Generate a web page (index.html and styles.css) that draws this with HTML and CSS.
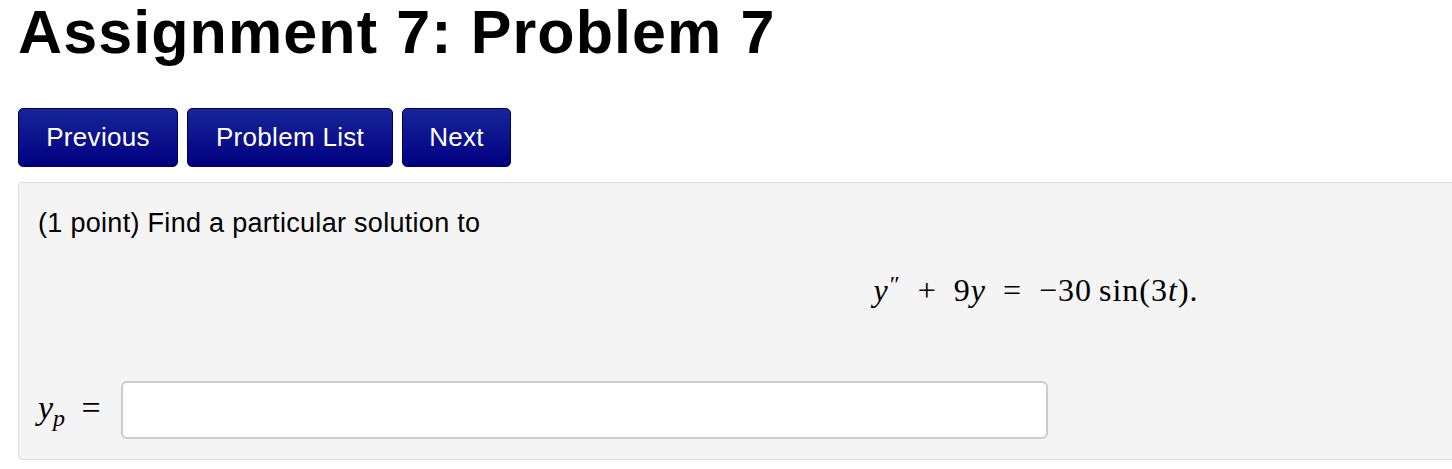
FILE: index.html
```html
<!DOCTYPE html>
<html lang="en">
<head>
<meta charset="UTF-8" />
<meta name="viewport" content="width=device-width, initial-scale=1" />
<title>Assignment 7: Problem 7</title>
<link rel="stylesheet" href="styles.css">
</head>
<body>
<div class="page">
  <h1 class="page-title">Assignment 7: Problem 7</h1>
  <nav class="problem-nav">
    <a href="#prev" class="nav-btn">Previous</a>
    <a href="#list" class="nav-btn">Problem List</a>
    <a href="#next" class="nav-btn">Next</a>
  </nav>
  <section class="problem">
    <p class="problem-text">(1 point) Find a particular solution to</p>
    <div class="math-display">
      <span class="mi">y</span><span class="prime">&Prime;</span>
      <span class="mo">+</span>
      <span class="mn">9</span><span class="mi">y</span>
      <span class="mo">=</span>
      <span class="mn neg">&minus;30</span><span class="fn">sin</span><span class="mn">(3</span><span class="mi">t</span><span class="mn">).</span>
    </div>
    <div class="answer-row">
      <label class="answer-label" for="ans">
        <span class="mi">y</span><sub class="mi sub">p</sub>
        <span class="mo">=</span>
      </label>
      <input type="text" id="ans" class="answer-input">
    </div>
  </section>
</div>
</body>
</html>
```

FILE: styles.css
```css
:root {
  --btn-top: #17259a;
  --btn-bottom: #00007f;
  --box-bg: #f4f4f4;
  --box-border: #dcdcdc;
  --ui-font: "Liberation Sans", Arial, sans-serif;
  --math-font: "Liberation Serif", "Times New Roman", serif;
}

*, *::before, *::after {
  box-sizing: border-box;
}

html, body {
  margin: 0;
  overflow: hidden;
  background: #fff;
  color: #000;
  font-family: var(--ui-font);
}

.page {
  padding-left: 18px;
}

/* Title */
.page-title {
  margin: 0;
  font-size: 61px;
  line-height: 64px;
  font-weight: bold;
  letter-spacing: 1.1px;
}

/* Nav buttons */
.problem-nav {
  display: flex;
  gap: 9px;
  margin-top: 44px;
}
.nav-btn {
  display: flex;
  align-items: center;
  justify-content: center;
  height: 59px;
  font-size: 26px;
  letter-spacing: 0.3px;
  color: #fff;
  text-decoration: none;
  background: linear-gradient(to bottom, var(--btn-top), var(--btn-bottom));
  border: 1px solid #00005e;
  border-radius: 5px;
}
.nav-btn:nth-child(1) { width: 160px; }
.nav-btn:nth-child(2) { width: 206px; }
.nav-btn:nth-child(3) { width: 109px; }

/* Problem box */
.problem {
  width: 2036px;
  margin-top: 15px;
  padding: 20px 19px 20px;
  background: var(--box-bg);
  border: 1px solid var(--box-border);
  border-radius: 4px;
}
.problem-text {
  margin: 5px 0 0;
  font-size: 27px;
  letter-spacing: 0.3px;
}

.math-display {
  margin-top: 32px;
  text-align: center;
  font-family: var(--math-font);
  font-size: 32px;
  letter-spacing: 1px;
  word-spacing: -2px;
}
.mi {
  font-style: italic;
}
.prime {
  font-size: 24px;
  vertical-align: 9px;
  margin-left: 1px;
}
.mo {
  margin: 0 10px;
}
.fn {
  margin-left: 7px;
}

/* Answer */
.answer-row {
  display: flex;
  align-items: center;
  margin-top: 72px;
}
.answer-label {
  font-family: var(--math-font);
  font-size: 34px;
  width: 83px;
  white-space: nowrap;
}
.answer-label .sub {
  font-size: 24px;
  vertical-align: -7px;
}
.answer-label .mo {
  margin-left: 8px;
}
.answer-input {
  width: 927px;
  height: 58px;
  background: #fff;
  border: 2px solid #ccc;
  border-radius: 6px;
  font-size: 24px;
}
```
